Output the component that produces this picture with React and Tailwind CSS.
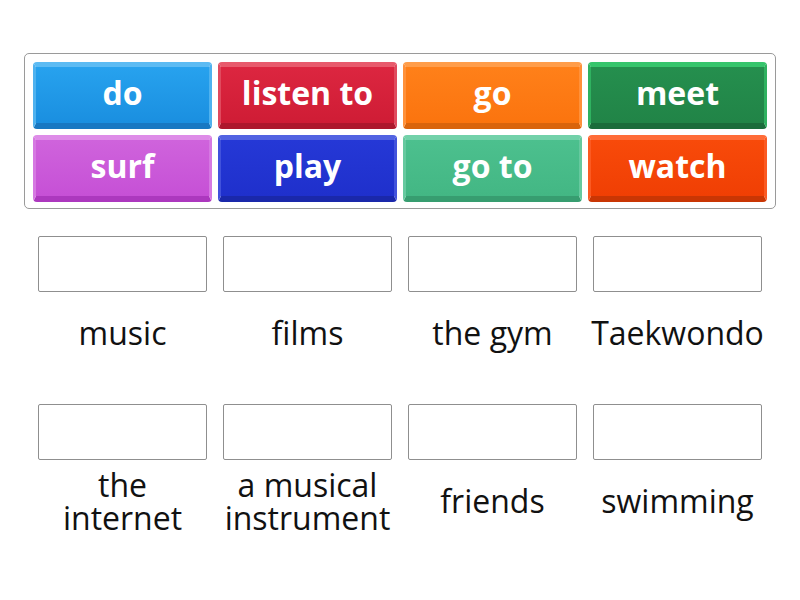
import React from 'react';

const tiles = [
  { text: 'do', face: 'bg-gradient-to-b from-[#27a2ee] to-[#1a8fe0]', edge: 'border-t-[#5cbbf3] border-x-[#4fb2ef] border-b-[#1878c2]' },
  { text: 'listen to', face: 'bg-gradient-to-b from-[#dc2640] to-[#cf1c35]', edge: 'border-t-[#e85a6c] border-x-[#e04a5e] border-b-[#ad172c]' },
  { text: 'go', face: 'bg-gradient-to-b from-[#ff8019] to-[#fb740e]', edge: 'border-t-[#ff9d4a] border-x-[#ff913a] border-b-[#d9640c]' },
  { text: 'meet', face: 'bg-gradient-to-b from-[#258f4e] to-[#218447]', edge: 'border-t-[#36c56c] border-x-[#2fb260] border-b-[#1b6c3b]' },
  { text: 'surf', face: 'bg-gradient-to-b from-[#cf63dc] to-[#c650d6]', edge: 'border-t-[#de8ce8] border-x-[#d679e2] border-b-[#ac38be]' },
  { text: 'play', face: 'bg-gradient-to-b from-[#2538d6] to-[#1f30cc]', edge: 'border-t-[#5263e2] border-x-[#4152dc] border-b-[#1a28aa]' },
  { text: 'go to', face: 'bg-gradient-to-b from-[#4cc08e] to-[#43b784]', edge: 'border-t-[#72d1a9] border-x-[#66c99f] border-b-[#379d70]' },
  { text: 'watch', face: 'bg-gradient-to-b from-[#f84a0a] to-[#f03f04]', edge: 'border-t-[#ff6c38] border-x-[#fb5a22] border-b-[#c93604]' },
];

const targets = [
  ['music'],
  ['films'],
  ['the gym'],
  ['Taekwondo'],
  ['the', 'internet'],
  ['a musical', 'instrument'],
  ['friends'],
  ['swimming'],
];

function Tile({ text, face, edge }) {
  return (
    <div className={`h-[67px] rounded-[4px] border-t-[5px] border-x-[3px] border-b-[6px] ${edge} ${face} flex items-center justify-center`}>
      <span className="text-white font-bold text-[32px] leading-none pb-[5px]">{text}</span>
    </div>
  );
}

export default function App() {
  return (
    <div className="w-[800px] h-[600px] bg-white font-['Open_Sans',sans-serif]">
      <div className="pt-[53px] px-[24px]">
        <div className="border border-[#9a9a9a] rounded-[5px] pt-[8px] px-[8px] pb-[6px] grid grid-cols-4 gap-[6px]">
          {tiles.map((t) => (
            <Tile key={t.text} {...t} />
          ))}
        </div>
      </div>

      {/* drop zones */}
      <div className="mx-[30px] grid grid-cols-4">
        {targets.map((lines, i) => (
          <div key={i} className="pt-[27px] px-[8px] flex flex-col">
            <div className="h-[56px] border border-[#8f8f8f] rounded-[2px]" />
            <div className="h-[85px] pb-[4px] flex flex-col items-center justify-center text-center text-[#111] text-[32px] leading-[33px] whitespace-nowrap">
              {lines.map((l, j) => (
                <span key={j}>{l}</span>
              ))}
            </div>
          </div>
        ))}
      </div>
    </div>
  );
}
